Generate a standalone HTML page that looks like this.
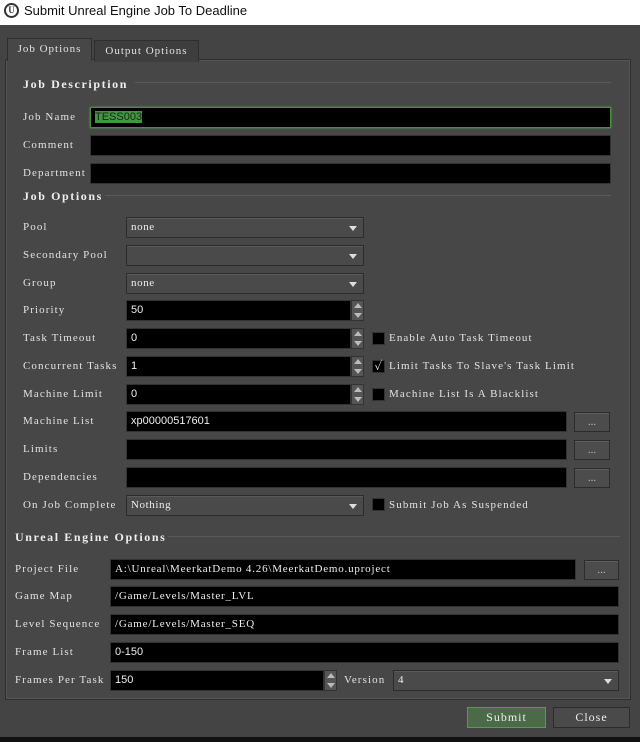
<!DOCTYPE html>
<html><head><style>
*{box-sizing:border-box;margin:0;padding:0}
body{width:640px;height:742px;background:#444;position:relative;overflow:hidden;font-family:"Liberation Serif","Noto Serif CJK SC",serif;font-size:11px;color:#e2e2e2}
.a{position:absolute}
.title{left:0;top:0;width:640px;height:25px;background:#fff;color:#111;font-family:"Liberation Sans",sans-serif;font-size:13px;line-height:22px;padding-left:24px}
.logo{left:4px;top:3px;width:15px;height:15px;border:2px solid #333;border-radius:50%;font-size:9px;font-weight:bold;line-height:11px;text-align:center;color:#333}
.panel{left:5px;top:59px;width:626px;height:641px;border:1px solid #2e2e2e;background:#474747;box-shadow:inset 0 0 0 1px #555}
.tab{height:22px;border:1px solid #2e2e2e;border-bottom:none;background:#3e3e3e;line-height:20px;text-align:center;letter-spacing:1px}
.lbl{letter-spacing:1.1px;margin-top:1px}
.hdr{font-weight:bold;font-size:12px;letter-spacing:1.6px;color:#eee}
.line{height:1px;background:#2a2a2a;border-bottom:1px solid #5a5a5a}
.f{background:#000;border:1px solid #333;height:21px;line-height:19px;padding-left:4px;color:#eee;font-family:"Liberation Sans",sans-serif;font-size:11px}
.c{background:#4a4a4a;border:1px solid #2c2c2c;height:21px;line-height:19px;padding-left:4px;color:#eee;box-shadow:inset 0 1px 0 #5a5a5a;letter-spacing:.6px}
.c:after{content:"";position:absolute;right:6px;top:8px;border-left:4px solid transparent;border-right:4px solid transparent;border-top:5px solid #ddd}
.sp{width:13px;height:21px;background:#555;border:1px solid #333}
.sp:before{content:"";position:absolute;left:2px;top:2px;border-left:4px solid transparent;border-right:4px solid transparent;border-bottom:5px solid #bbb}
.sp:after{content:"";position:absolute;left:2px;bottom:2px;border-left:4px solid transparent;border-right:4px solid transparent;border-top:5px solid #bbb}
.cb{width:13px;height:13px;background:#000;border:1px solid #333;font-size:12px;line-height:11px;text-align:center;color:#fff}
.b{background:#4c4c4c;border:1px solid #2c2c2c;height:20px;text-align:center;line-height:18px;color:#bbb;box-shadow:inset 0 1px 0 #5e5e5e}
.btn{height:21px;border:1px solid #2c2c2c;text-align:center;line-height:19px;font-size:12px;color:#eee;letter-spacing:1px}
.sf{font-family:"Liberation Serif",serif;letter-spacing:.8px}
</style></head><body>
<div class="a title">Submit Unreal Engine Job To Deadline</div>
<div class="a logo">U</div>
<div class="a panel"></div>
<div class="a tab" style="left:7px;top:38px;width:85px;background:#474747;height:23px">Job Options</div>
<div class="a tab" style="left:94px;top:40px;width:105px">Output Options</div>

<div class="a hdr" style="left:23px;top:77px">Job Description</div>
<div class="a line" style="left:135px;top:82px;width:476px"></div>
<div class="a lbl" style="left:23px;top:110px">Job Name</div>
<div class="a f" style="left:90px;top:107px;width:521px;border-color:#4c8a3c;box-shadow:0 0 2px #5a5"><span style="background:#3c9a3c;color:#222">TESS003</span></div>
<div class="a lbl" style="left:23px;top:138px">Comment</div>
<div class="a f" style="left:90px;top:135px;width:521px"></div>
<div class="a lbl" style="left:23px;top:166px">Department</div>
<div class="a f" style="left:90px;top:163px;width:521px"></div>

<div class="a hdr" style="left:23px;top:189px">Job Options</div>
<div class="a line" style="left:105px;top:195px;width:506px"></div>
<div class="a lbl" style="left:23px;top:220px">Pool</div>
<div class="a c" style="left:126px;top:217px;width:238px">none</div>
<div class="a lbl" style="left:23px;top:248px">Secondary Pool</div>
<div class="a c" style="left:126px;top:245px;width:238px"></div>
<div class="a lbl" style="left:23px;top:276px">Group</div>
<div class="a c" style="left:126px;top:273px;width:238px">none</div>
<div class="a lbl" style="left:23px;top:303px">Priority</div>
<div class="a f" style="left:126px;top:300px;width:225px">50</div><div class="a sp" style="left:351px;top:300px"></div>
<div class="a lbl" style="left:23px;top:331px">Task Timeout</div>
<div class="a f" style="left:126px;top:328px;width:225px">0</div><div class="a sp" style="left:351px;top:328px"></div>
<div class="a cb" style="left:372px;top:332px"></div><div class="a lbl" style="left:389px;top:331px">Enable Auto Task Timeout</div>
<div class="a lbl" style="left:23px;top:359px">Concurrent Tasks</div>
<div class="a f" style="left:126px;top:356px;width:225px">1</div><div class="a sp" style="left:351px;top:356px"></div>
<div class="a cb" style="left:372px;top:360px">✓</div><div class="a lbl" style="left:389px;top:359px">Limit Tasks To Slave's Task Limit</div>
<div class="a lbl" style="left:23px;top:387px">Machine Limit</div>
<div class="a f" style="left:126px;top:384px;width:225px">0</div><div class="a sp" style="left:351px;top:384px"></div>
<div class="a cb" style="left:372px;top:388px"></div><div class="a lbl" style="left:389px;top:387px">Machine List Is A Blacklist</div>
<div class="a lbl" style="left:23px;top:414px">Machine List</div>
<div class="a f" style="left:126px;top:411px;width:441px">xp00000517601</div><div class="a b" style="left:574px;top:412px;width:36px">...</div>
<div class="a lbl" style="left:23px;top:442px">Limits</div>
<div class="a f" style="left:126px;top:439px;width:441px"></div><div class="a b" style="left:574px;top:440px;width:36px">...</div>
<div class="a lbl" style="left:23px;top:470px">Dependencies</div>
<div class="a f" style="left:126px;top:467px;width:441px"></div><div class="a b" style="left:574px;top:468px;width:36px">...</div>
<div class="a lbl" style="left:23px;top:498px">On Job Complete</div>
<div class="a c" style="left:126px;top:495px;width:238px">Nothing</div>
<div class="a cb" style="left:372px;top:498px"></div><div class="a lbl" style="left:389px;top:498px">Submit Job As Suspended</div>

<div class="a hdr" style="left:15px;top:530px">Unreal Engine Options</div>
<div class="a line" style="left:168px;top:536px;width:452px"></div>
<div class="a lbl" style="left:15px;top:562px">Project File</div>
<div class="a f sf" style="left:110px;top:559px;width:466px">A:\Unreal\MeerkatDemo 4.26\MeerkatDemo.uproject</div><div class="a b" style="left:584px;top:560px;width:35px">...</div>
<div class="a lbl" style="left:15px;top:589px">Game Map</div>
<div class="a f sf" style="left:110px;top:586px;width:509px">/Game/Levels/Master_LVL</div>
<div class="a lbl" style="left:15px;top:617px">Level Sequence</div>
<div class="a f sf" style="left:110px;top:614px;width:509px">/Game/Levels/Master_SEQ</div>
<div class="a lbl" style="left:15px;top:645px">Frame List</div>
<div class="a f" style="left:110px;top:642px;width:509px">0-150</div>
<div class="a lbl" style="left:15px;top:673px">Frames Per Task</div>
<div class="a f" style="left:110px;top:670px;width:214px">150</div><div class="a sp" style="left:324px;top:670px"></div>
<div class="a lbl" style="left:344px;top:673px">Version</div>
<div class="a c" style="left:393px;top:670px;width:226px">4</div>

<div class="a btn" style="left:467px;top:707px;width:79px;background:#4a6a48;border-color:#5c9a52">Submit</div>
<div class="a btn" style="left:553px;top:707px;width:77px;background:#4a4a4a">Close</div>
<div class="a" style="left:0;top:737px;width:640px;height:5px;background:#111"></div>
</body></html>
